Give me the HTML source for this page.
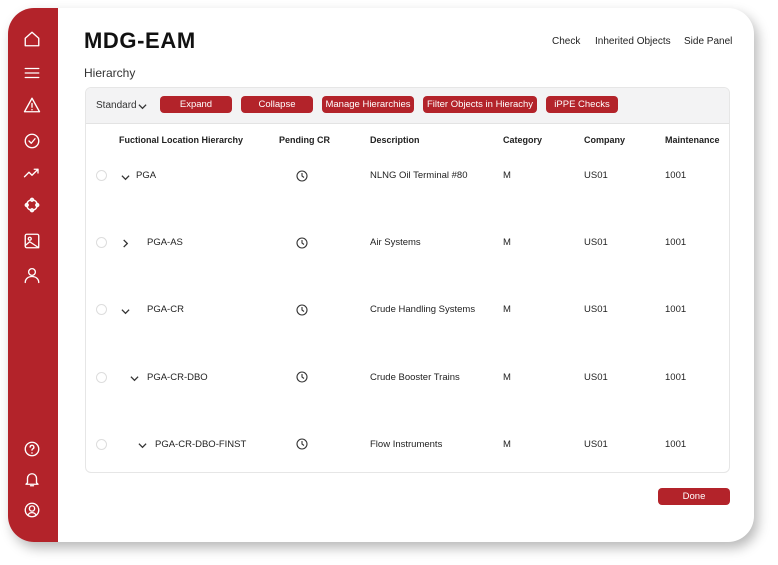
<!DOCTYPE html>
<html><head><meta charset="utf-8"><style>
*{margin:0;padding:0;box-sizing:border-box}
body{width:778px;height:565px;background:#fff;font-family:"Liberation Sans",sans-serif;position:relative;overflow:hidden;color:#222}
.card{position:absolute;left:8px;top:8px;width:746px;height:534px;background:#fff;border-radius:26px;box-shadow:4px 6px 12px rgba(0,0,0,.28);overflow:hidden}
.side{position:absolute;left:0;top:0;width:50px;height:100%;background:#b3232a}
.side svg{position:absolute;left:15px;width:18px;height:18px;fill:none;stroke:#fff;stroke-width:1.8;stroke-linecap:round;stroke-linejoin:round}
.a{position:absolute;white-space:nowrap}
h1{position:absolute;left:84px;top:28px;font-size:22px;font-weight:bold;letter-spacing:.6px;color:#111}
.nav{font-size:10px;color:#222;top:36px}
.box{position:absolute;left:85px;top:87px;width:645px;height:386px;border:1.5px solid #e6e6e6;border-radius:6px;overflow:hidden}
.tb{position:absolute;left:0;top:0;width:100%;height:36px;background:#f3f3f4;border-bottom:1.5px solid #e3e3e3}
.btn{position:absolute;top:96px;height:17px;background:#b3232a;color:#fff;border-radius:4px;font-size:9.5px;text-align:center;line-height:17px}
.th{font-size:9px;font-weight:bold;top:135px;color:#222}
.td{font-size:9.5px;color:#222}
.rad{position:absolute;left:96px;width:11px;height:11px;border:1px solid #ddd;border-radius:50%}
.clk{position:absolute;left:296px;width:12px;height:12px}
.chev{position:absolute;width:9px;height:9px;fill:none;stroke:#333;stroke-width:1.4}
</style></head><body>
<div class="card">
<div class="side">
<svg style="top:22px" viewBox="0 0 24 24"><path d="M3 11L12 3l9 8v10H3z"/></svg>
<svg style="top:56px" viewBox="0 0 24 24"><path d="M3 6h18M3 12h18M3 18h18"/></svg>
<svg style="top:88px" viewBox="0 0 24 24"><path d="M12 3L2 21h20z M12 10v5 M12 18v.5"/></svg>
<svg style="top:124px" viewBox="0 0 24 24"><circle cx="12" cy="12" r="9"/><path d="M8 12l3 3 5-6"/></svg>
<svg style="top:156px" viewBox="0 0 24 24"><path d="M2 17l6-6 4 4 8-8M15 7h5v5"/></svg>
<svg style="top:188px" viewBox="0 0 24 24"><circle cx="12" cy="12" r="7"/><circle cx="12" cy="5" r="2"/><circle cx="12" cy="19" r="2"/><circle cx="5" cy="12" r="2"/><circle cx="19" cy="12" r="2"/></svg>
<svg style="top:224px" viewBox="0 0 24 24"><rect x="3" y="3" width="18" height="18" rx="2"/><circle cx="9" cy="9" r="2"/><path d="M3 18l6-5 12 8"/></svg>
<svg style="top:258px" viewBox="0 0 24 24"><circle cx="12" cy="8" r="4.5"/><path d="M3 22c0-5 4-8 9-8s9 3 9 8"/></svg>
<svg style="top:432px" viewBox="0 0 24 24"><circle cx="12" cy="12" r="9"/><path d="M9.5 9.5a2.5 2.5 0 1 1 3.5 2.3c-.7.4-1 1-1 1.7M12 17v.5"/></svg>
<svg style="top:462px" viewBox="0 0 24 24"><path d="M6 17V11a6 6 0 0 1 12 0v6l2 2H4zM10 21h4"/></svg>
<svg style="top:493px" viewBox="0 0 24 24"><circle cx="12" cy="12" r="9"/><circle cx="12" cy="10" r="3.5"/><path d="M7 18c1.5-2 3-2.5 5-2.5s3.5.5 5 2.5"/></svg>
</div>
</div>
<h1>MDG-EAM</h1>
<div class="a nav" style="left:552px">Check</div>
<div class="a nav" style="left:595px">Inherited Objects</div>
<div class="a nav" style="left:684px">Side Panel</div>
<div class="a" style="left:84px;top:66px;font-size:12px;color:#333">Hierarchy</div>
<div class="box"><div class="tb"></div></div>
<div class="a" style="left:96px;top:100px;font-size:10px;color:#333">Standard</div>
<svg class="chev" style="left:138px;top:102px" viewBox="0 0 10 10"><path d="M1 3l4 4 4-4"/></svg>
<div class="btn" style="left:160px;width:72px">Expand</div>
<div class="btn" style="left:241px;width:72px">Collapse</div>
<div class="btn" style="left:322px;width:92px">Manage Hierarchies</div>
<div class="btn" style="left:423px;width:114px">Filter Objects in Hierachy</div>
<div class="btn" style="left:546px;width:72px">iPPE Checks</div>
<div class="a th" style="left:119px">Fuctional Location Hierarchy</div>
<div class="a th" style="left:279px">Pending CR</div>
<div class="a th" style="left:370px">Description</div>
<div class="a th" style="left:503px">Category</div>
<div class="a th" style="left:584px">Company</div>
<div class="a th" style="left:665px">Maintenance</div>

<div class="rad" style="top:170px"></div>
<svg class="chev" style="left:121px;top:173px" viewBox="0 0 10 10"><path d="M1 3l4 4 4-4"/></svg>
<div class="a td" style="left:136px;top:170px">PGA</div>
<svg class="clk" style="top:170px" viewBox="0 0 24 24" fill="none" stroke="#333" stroke-width="2.2"><circle cx="12" cy="12" r="10"/><path d="M12 6v6l4 3"/></svg>
<div class="a td" style="left:370px;top:170px">NLNG Oil Terminal #80</div>
<div class="a td" style="left:503px;top:170px">M</div>
<div class="a td" style="left:584px;top:170px">US01</div>
<div class="a td" style="left:665px;top:170px">1001</div>

<div class="rad" style="top:237px"></div>
<svg class="chev" style="left:121px;top:239px" viewBox="0 0 10 10"><path d="M3 1l4 4-4 4"/></svg>
<div class="a td" style="left:147px;top:237px">PGA-AS</div>
<svg class="clk" style="top:237px" viewBox="0 0 24 24" fill="none" stroke="#333" stroke-width="2.2"><circle cx="12" cy="12" r="10"/><path d="M12 6v6l4 3"/></svg>
<div class="a td" style="left:370px;top:237px">Air Systems</div>
<div class="a td" style="left:503px;top:237px">M</div>
<div class="a td" style="left:584px;top:237px">US01</div>
<div class="a td" style="left:665px;top:237px">1001</div>

<div class="rad" style="top:304px"></div>
<svg class="chev" style="left:121px;top:307px" viewBox="0 0 10 10"><path d="M1 3l4 4 4-4"/></svg>
<div class="a td" style="left:147px;top:304px">PGA-CR</div>
<svg class="clk" style="top:304px" viewBox="0 0 24 24" fill="none" stroke="#333" stroke-width="2.2"><circle cx="12" cy="12" r="10"/><path d="M12 6v6l4 3"/></svg>
<div class="a td" style="left:370px;top:304px">Crude Handling Systems</div>
<div class="a td" style="left:503px;top:304px">M</div>
<div class="a td" style="left:584px;top:304px">US01</div>
<div class="a td" style="left:665px;top:304px">1001</div>

<div class="rad" style="top:372px"></div>
<svg class="chev" style="left:130px;top:374px" viewBox="0 0 10 10"><path d="M1 3l4 4 4-4"/></svg>
<div class="a td" style="left:147px;top:372px">PGA-CR-DBO</div>
<svg class="clk" style="top:371px" viewBox="0 0 24 24" fill="none" stroke="#333" stroke-width="2.2"><circle cx="12" cy="12" r="10"/><path d="M12 6v6l4 3"/></svg>
<div class="a td" style="left:370px;top:372px">Crude Booster Trains</div>
<div class="a td" style="left:503px;top:372px">M</div>
<div class="a td" style="left:584px;top:372px">US01</div>
<div class="a td" style="left:665px;top:372px">1001</div>

<div class="rad" style="top:439px"></div>
<svg class="chev" style="left:138px;top:441px" viewBox="0 0 10 10"><path d="M1 3l4 4 4-4"/></svg>
<div class="a td" style="left:155px;top:439px">PGA-CR-DBO-FINST</div>
<svg class="clk" style="top:438px" viewBox="0 0 24 24" fill="none" stroke="#333" stroke-width="2.2"><circle cx="12" cy="12" r="10"/><path d="M12 6v6l4 3"/></svg>
<div class="a td" style="left:370px;top:439px">Flow Instruments</div>
<div class="a td" style="left:503px;top:439px">M</div>
<div class="a td" style="left:584px;top:439px">US01</div>
<div class="a td" style="left:665px;top:439px">1001</div>

<div class="btn" style="left:658px;top:488px;width:72px;height:17px">Done</div>
</body></html>
